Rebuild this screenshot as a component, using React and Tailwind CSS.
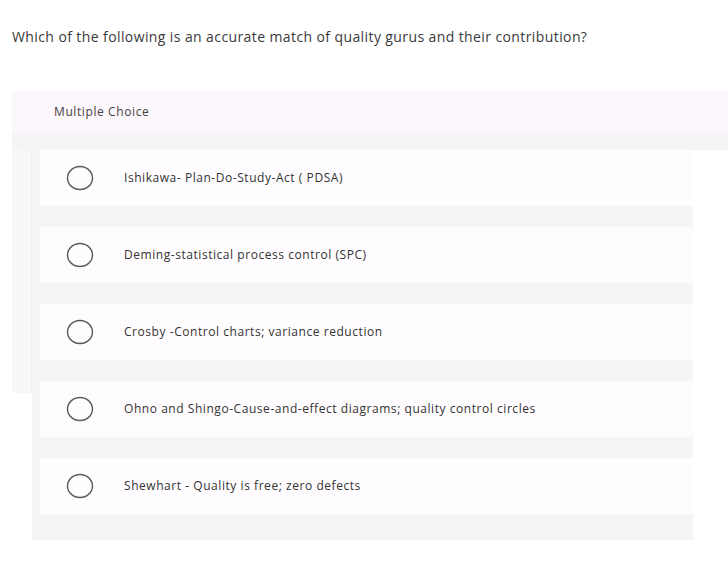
import React from "react";

const options = [
  "Ishikawa- Plan-Do-Study-Act ( PDSA)",
  "Deming-statistical process control (SPC)",
  "Crosby -Control charts; variance reduction",
  "Ohno and Shingo-Cause-and-effect diagrams; quality control circles",
  "Shewhart - Quality is free; zero defects",
];

function Radio() {
  return (
    <svg width="28" height="26" viewBox="0 0 28 26" className="shrink-0">
      <ellipse cx="14" cy="13" rx="12.5" ry="11.5" fill="none" stroke="#5a5a5a" strokeWidth="1.4" />
    </svg>
  );
}

export default function App() {
  return (
    <div className="w-[728px] h-[572px] bg-white overflow-hidden text-[#333]" style={{ fontFamily: "'Open Sans', sans-serif" }}>
      <div className="pt-[27px] pl-[12px] h-[91px]">
        <p className="text-[14px] leading-[20px] text-[#3a3a3a] tracking-[0.4px]">
          Which of the following is an accurate match of quality gurus and their contribution?
        </p>
      </div>
      <div className="ml-[12px]">
        <div className="h-[42px] bg-[#fcf7fc] flex items-center pl-[42px]">
          <span className="text-[12px] text-[#444] tracking-[0.6px]">Multiple Choice</span>
        </div>
        <div className="h-[17px] bg-[#f6f5f6]" />
        <div className="flex">
          <div className="w-[20px] h-[243px] bg-[#f9f8f9] border-r border-[#f0eff0]" />
          <div className="w-[661px] bg-[#f5f5f5] pl-[8px] pb-[26px] flex flex-col gap-[21px]">
            {options.map((o) => (
              <div key={o} className="h-[56px] bg-[#fefcfe] flex items-center pl-[26px]">
                <Radio />
                <span className="ml-[30px] text-[12px] text-[#333] tracking-[0.55px]">{o}</span>
              </div>
            ))}
          </div>
        </div>
      </div>
    </div>
  );
}
